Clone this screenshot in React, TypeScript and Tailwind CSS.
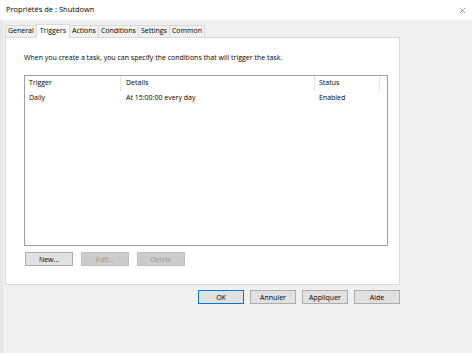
import { X } from 'lucide-react';

const tabs = ['General', 'Triggers', 'Actions', 'Conditions', 'Settings', 'Common'];

function Btn({ label, disabled, primary, width }: { label: string; disabled?: boolean; primary?: boolean; width: string }) {
  return (
    <button
      className={`${width} h-[14px] flex items-center justify-center text-[7px] leading-none border ${
        primary
          ? 'border-[#0078d7] bg-[#e1e1e1] text-black'
          : disabled
          ? 'border-[#bfbfbf] bg-[#cccccc] text-[#9a9a9a]'
          : 'border-[#adadad] bg-[#e1e1e1] text-black'
      }`}
    >
      {label}
    </button>
  );
}

export default function App() {
  return (
    <div className="w-[474px] h-[356px] bg-white" style={{ fontFamily: '"Open Sans", "Noto Sans", sans-serif' }}>
      <div className="w-[472px] h-[353px] flex flex-col bg-[#f0f0f0] border-l-[3px] border-[#e6e6e6]">
        {/* Title bar */}
        <div className="h-[20px] bg-white flex items-center justify-between pl-[6px] pr-[5px] -ml-[3px]">
          <span className="text-[7.5px] text-black">Propriétés de : Shutdown</span>
          <X size={9} strokeWidth={1.2} className="text-[#333]" />
        </div>

        <div className="flex flex-col pl-[2px] pt-[4px]">
          {/* Tab strip */}
          <div className="flex items-end h-[13px]">
            {tabs.map((t) => (
              <div
                key={t}
                className={
                  t === 'Triggers'
                    ? 'h-[14px] -mb-px -ml-px px-[3px] bg-white border border-b-0 border-[#d9d9d9] text-[7px] text-black flex items-center z-10'
                    : 'h-[12px] px-[2px] bg-[#f0f0f0] border border-b-0 border-[#d9d9d9] -ml-px first:ml-0 text-[7px] text-black flex items-center'
                }
              >
                {t}
              </div>
            ))}
          </div>

          {/* Tab pane */}
          <div className="w-[395px] h-[248px] bg-white border border-[#d9d9d9] pl-[18px] pt-[15px] flex flex-col">
            <p className="text-[7px] text-black leading-[10px]">
              When you create a task, you can specify the conditions that will trigger the task.
            </p>

            <div className="mt-[12px] w-[364px] h-[171px] border border-[#a0a0a0] flex flex-col">
              <div className="flex h-[15px] text-[7px] text-black items-center">
                <div className="w-[96px] pl-[4px] border-r border-[#e5e5e5] h-full flex items-center">Trigger</div>
                <div className="w-[194px] pl-[5px] border-r border-[#e5e5e5] h-full flex items-center">Details</div>
                <div className="w-[65px] pl-[4px] border-r border-[#e5e5e5] h-full flex items-center">Status</div>
              </div>
              <div className="flex h-[14px] text-[7px] text-black items-center">
                <div className="w-[96px] pl-[4px]">Daily</div>
                <div className="w-[194px] pl-[5px]">At 15:00:00 every day</div>
                <div className="w-[65px] pl-[4px]">Enabled</div>
              </div>
            </div>

            <div className="flex gap-[8px] mt-[6px] pl-px">
              <Btn label="New..." width="w-[48px]" />
              <Btn label="Edit..." width="w-[48px]" disabled />
              <Btn label="Delete" width="w-[48px]" disabled />
            </div>
          </div>

          {/* Dialog buttons */}
          <div className="w-[395px] flex justify-end gap-[6px] mt-[5px]">
            <Btn label="OK" width="w-[46px]" primary />
            <Btn label="Annuler" width="w-[46px]" />
            <Btn label="Appliquer" width="w-[46px]" />
            <Btn label="Aide" width="w-[46px]" />
          </div>
        </div>
      </div>
    </div>
  );
}
